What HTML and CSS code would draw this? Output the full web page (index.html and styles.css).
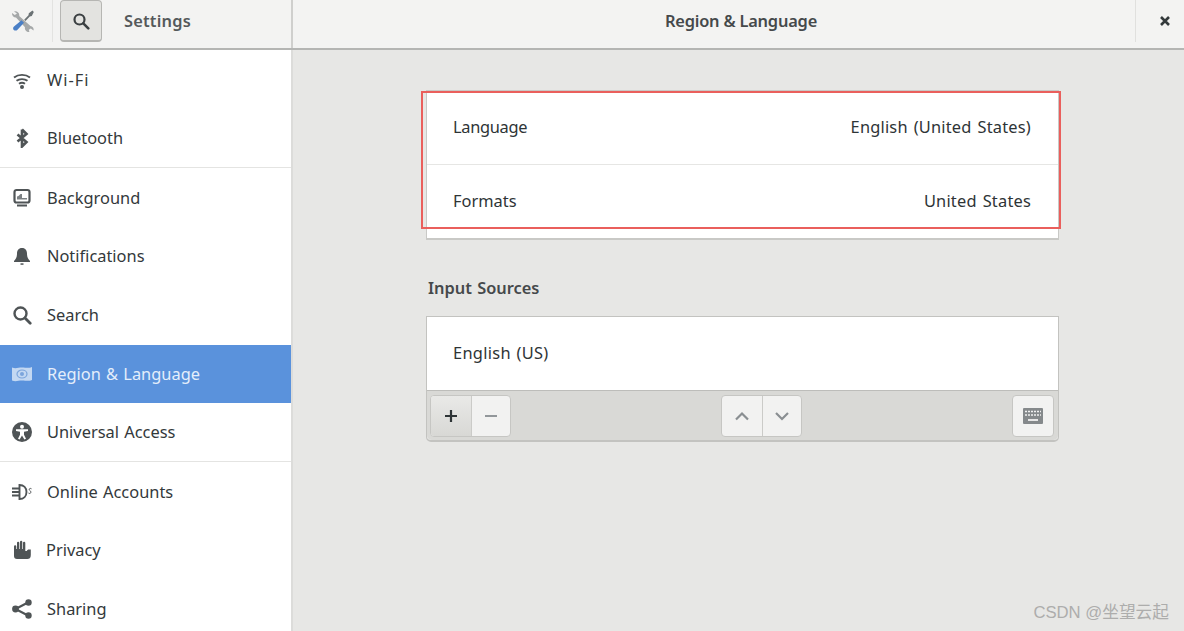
FILE: index.html
```html
<!DOCTYPE html>
<html lang="en">
<head>
<meta charset="utf-8">
<title>Settings</title>
<link rel="stylesheet" href="styles.css">
</head>
<body>
<div class="window">
  <header class="titlebar">
    <div class="title-left">
      <div class="app-icon">
        <svg width="22" height="22" viewBox="0 0 22 22">
          <path d="M2 1.500a4 4 0 0 1 5.200 4.600L18.500 16a3.600 3.600 0 0 1 3 4.500l-2.700-2-2 1.300.6 2.200a3.800 3.800 0 0 1-4.400-4.700L4 7.500A4 4 0 0 1 0 3l2.800 2L5 3.500z" fill="#a5a8a9"/>
          <path d="M20.500 .5l1.300 1.500-2 4-2 .5-4.300 4.500-1.300-1.300 4.300-4.500.3-2z" fill="#6b7275"/>
          <path d="M9.500 10.200l2.500 2.500-6.500 7c-1 1.100-2.700 1.200-3.700.2-1-1-.9-2.500.2-3.500z" fill="#4a7fc6"/>
        </svg>
      </div>
      <div class="search-btn">
        <svg width="18" height="18" viewBox="0 0 18 18"><circle cx="7.500" cy="7.500" r="5" fill="none" stroke="#3b4042" stroke-width="2.200"/><path d="M11.300 11.300l5 5" stroke="#3b4042" stroke-width="2.600" stroke-linecap="round"/></svg>
      </div>
      <div class="app-title">Settings</div>
    </div>
    <div class="title-main">Region &amp; Language</div>
    <div class="title-close">
      <svg width="12" height="12" viewBox="0 0 12 12"><path d="M2 2l8 8M10 2l-8 8" stroke="#33393b" stroke-width="2.600"/></svg>
    </div>
  </header>
  <div class="content">
    <nav class="sidebar">
      <div class="row">
        <svg class="ico" width="20" height="20" viewBox="0 0 20 20"><g fill="none" stroke="#4f5456" stroke-width="1.900"><path d="M2 7.500c4.500-3.500 11.500-3.500 16 0"/><path d="M4.500 10.800c3-2.300 8-2.300 11 0"/><path d="M7 13.800c1.700-1.200 4.300-1.200 6 0"/></g><circle cx="10" cy="17" r="2" fill="#4f5456"/></svg>
        <span class="wifi">Wi-Fi</span>
      </div>
      <div class="row sep">
        <svg class="ico" width="20" height="20" viewBox="0 0 20 20"><path d="M10 1.500v17l4.500-4.500L5.500 6.500M10 1.500L14.500 6 5.500 13.500" fill="none" stroke="#4f5456" stroke-width="2.600"/></svg>
        <span>Bluetooth</span>
      </div>
      <div class="row">
        <svg class="ico" width="20" height="20" viewBox="0 0 20 20"><rect x="2.500" y="2" width="15" height="12.500" rx="2" fill="none" stroke="#4f5456" stroke-width="2.200"/><path d="M5 11.500h10v-1.500H10V6H8.500L6.500 8 5 8.500z" fill="#7c8184"/><rect x="5" y="16.500" width="10" height="2" fill="#4f5456"/></svg>
        <span>Background</span>
      </div>
      <div class="row">
        <svg class="ico" width="20" height="20" viewBox="0 0 20 20"><path d="M10 2c3.600 0 5 2.500 5 5.500 0 3.500 1 5.500 3 7.500v1H2v-1c2-2 3-4 3-7.500C5 4.500 6.400 2 10 2z" fill="#4f5456"/><rect x="8.500" y="17.300" width="3" height="1.500" fill="#4f5456"/></svg>
        <span>Notifications</span>
      </div>
      <div class="row">
        <svg class="ico" width="20" height="20" viewBox="0 0 20 20"><circle cx="8.500" cy="8.500" r="6" fill="none" stroke="#4f5456" stroke-width="2.400"/><path d="M13 13l5.200 5.200" stroke="#4f5456" stroke-width="2.800" stroke-linecap="round"/></svg>
        <span>Search</span>
      </div>
      <div class="row active">
        <svg class="ico" width="20" height="20" viewBox="0 0 20 20"><path d="M0 3.500c4 1.500 6 0 10 0s6 1 10-.5v13c-4 1.500-6 .5-10 .5S4 18 0 16.500z" fill="#c3d8f2"/><ellipse cx="10" cy="10" rx="5" ry="4" fill="none" stroke="#7ba5dc" stroke-width="1.200"/><circle cx="10" cy="10" r="2" fill="#7ba5dc"/></svg>
        <span>Region &amp; Language</span>
      </div>
      <div class="row sep">
        <svg class="ico" width="20" height="20" viewBox="0 0 20 20"><circle cx="10" cy="10" r="10" fill="#4f5456"/><circle cx="10" cy="4.800" r="2" fill="#fff"/><path d="M4 7.200h12v1.800l-4 .8v3l2 4-1.600.8-2.400-4-2.400 4-1.600-.8 2-4v-3L4 9z" fill="#fff"/></svg>
        <span>Universal Access</span>
      </div>
      <div class="row">
        <svg class="ico" width="20" height="20" viewBox="0 0 20 20"><g fill="none" stroke="#4f5456" stroke-width="1.900"><path d="M7.500 3c4.200 0 7 3 7 7s-2.800 7-7 7z"/><path d="M0 6.500h7M0 10h7M0 13.500h7"/><path d="M19.500 6.800c-1.400-1-2.600 0-2.200 1s1.900 1.400 1.500 2.700-1.500 1.100-2.300.6" stroke-width="1"/></g></svg>
        <span>Online Accounts</span>
      </div>
      <div class="row">
        <svg class="ico" width="20" height="20" viewBox="0 0 20 20"><path d="M2 16V6.500a1 1 0 0 1 2.300 0V9h.7V3a1 1 0 0 1 2.300 0v6H8V2a1 1 0 0 1 2.300 0v7h.7V3a1 1 0 0 1 2.300 0v8h1.500c.5-1 1-1.500 2-1.500h2V15c0 3-1.500 4-3.500 4H5c-2 0-3-1-3-3z" fill="#4f5456"/></svg>
        <span class="privacy">Privacy</span>
      </div>
      <div class="row">
        <svg class="ico" width="20" height="20" viewBox="0 0 20 20"><path d="M16 3.500L3.500 10 16 16.500" fill="none" stroke="#4f5456" stroke-width="2.200"/><circle cx="16.500" cy="3.500" r="3.200" fill="#4f5456"/><circle cx="3.500" cy="10" r="3.400" fill="#4f5456"/><circle cx="16.500" cy="16.500" r="3.200" fill="#4f5456"/></svg>
        <span>Sharing</span>
      </div>
    </nav>
    <main class="panel">
      <section class="card">
        <div class="setting"><span class="lang">Language</span><span class="value">English (United States)</span></div>
        <div class="setting formats"><span>Formats</span><span class="value">United States</span></div>
      </section>
      <h2 class="heading">Input Sources</h2>
      <section class="sources">
        <div class="source">English (US)</div>
        <div class="toolbar">
          <div class="group">
            <div class="tbtn pressed"><svg width="14" height="14" viewBox="0 0 14 14"><path d="M7 1v12M1 7h12" stroke="#2e3436" stroke-width="2.200"/></svg></div>
            <div class="tbtn"><svg width="14" height="14" viewBox="0 0 14 14"><path d="M1 7h12" stroke="#92979a" stroke-width="2"/></svg></div>
          </div>
          <div class="group">
            <div class="tbtn"><svg width="16" height="16" viewBox="0 0 16 16"><path d="M2 11.500L8 5.500l6 6" fill="none" stroke="#8a8f92" stroke-width="2.200"/></svg></div>
            <div class="tbtn"><svg width="16" height="16" viewBox="0 0 16 16"><path d="M2 5l6 6 6-6" fill="none" stroke="#8a8f92" stroke-width="2.200"/></svg></div>
          </div>
          <div class="group">
            <div class="tbtn"><svg width="20" height="16" viewBox="0 0 20 16"><rect width="20" height="16" rx="1" fill="#85898b"/><path d="M2 3.500h16M2 7h16" stroke="#f1f1f1" stroke-width="1.500" stroke-dasharray="2 1"/><path d="M5 12h10" stroke="#f1f1f1" stroke-width="1.800"/></svg></div>
          </div>
        </div>
      </section>
    </main>
  </div>
  <div class="annotation"></div>
  <div class="watermark">CSDN @坐望云起</div>
</div>
</body>
</html>
```
FILE: styles.css
```css
* { box-sizing: border-box; }
html, body { margin: 0; height: 100%; overflow: hidden; }
body { font-family: "Noto Sans", "Noto Sans CJK SC", sans-serif; font-size: 16.400px; word-spacing: 1px; color: #2e3436; }
.window { position: relative; width: 1184px; height: 631px; overflow: hidden; background: #e7e7e5; }

.titlebar { display: flex; height: 50px; background: #f3f3f2; border-bottom: 2px solid #b4b5b3; }
.title-left { display: flex; align-items: flex-start; width: 293px; flex: none; border-right: 2px solid #cfcfcd; }
.app-icon { display: flex; align-items: center; justify-content: center; width: 53px; height: 42px; border-right: 1px solid #e3e3e1; padding-right: 6px; }
.search-btn { display: flex; align-items: center; justify-content: center; width: 42px; height: 42px; margin-left: 7px; border: 1px solid #b6b6b3; border-bottom-width: 2px; border-radius: 4px; background: #e3e3e0; }
.app-title { margin-left: 22px; font-weight: 600; line-height: 42px; letter-spacing: 0.200px; color: #55595b; }
.title-main { flex: 1; padding-left: 54px; text-align: center; line-height: 42px; font-weight: 600; word-spacing: 0; letter-spacing: -0.200px; color: #45494b; }
.title-close { display: flex; align-items: center; justify-content: center; width: 49px; height: 42px; padding-left: 9px; border-left: 1px solid #e0e0de; }

.content { display: flex; height: 581px; }
.sidebar { width: 293px; flex: none; padding-top: 0.600px; background: #fff; border-right: 2px solid #dcdcda; }
.row { display: flex; align-items: center; height: 58.800px; padding-left: 12px; gap: 15px; color: #33393b; }
.row .ico { flex: none; }
.row span { margin-bottom: 1px; }
.row.sep { border-bottom: 1px solid #e4e4e2; }
.row.active { background: #5a92dc; color: #e4eefb; }
.wifi { letter-spacing: 1px; }
.privacy { margin-left: -1px; }

.panel { flex: 1; padding: 40px 0 0 133px; }
.card { width: 633px; background: #fff; border: 1px solid #c9c9c6; border-width: 1px 1px 2px 1px; }
.setting { display: flex; justify-content: space-between; align-items: center; height: 73px; padding: 0 27px 2px 26px; }
.lang { letter-spacing: -0.300px; }
.value { letter-spacing: 0.200px; word-spacing: 1.500px; }
.formats { height: 74px; border-top: 1px solid #e6e6e4; }
.heading { margin: 36px 0 16px 2px; font-size: 16.400px; line-height: 24px; font-weight: 600; color: #45494b; }
.sources { width: 633px; border: 1px solid #c3c3c0; border-radius: 0 0 5px 5px; border-bottom-width: 2px; }
.source { height: 73px; display: flex; align-items: center; padding: 0 0 2px 26px; letter-spacing: 0.300px; background: #fff; }
.toolbar { display: flex; justify-content: space-between; align-items: center; height: 50px; padding: 0 4px 0 3px; background: #d9d9d6; border-top: 1px solid #bdbdba; border-radius: 0 0 5px 5px; }
.group { display: flex; border: 1px solid #c6c6c3; border-radius: 4px; background: #f2f2f1; }
.tbtn { display: flex; align-items: center; justify-content: center; width: 40px; height: 40px; }
.tbtn + .tbtn { width: 39px; border-left: 1px solid #cbcbc8; }
.tbtn.pressed { background: linear-gradient(#e9e9e7, #d8d8d5); border-radius: 3px 0 0 3px; }

.annotation { position: absolute; left: 421px; top: 91px; width: 640px; height: 138px; border: 2px solid #ea5f5c; pointer-events: none; }
.watermark { position: absolute; right: 15px; top: 603px; font-family: "Liberation Sans", "Noto Sans CJK SC", sans-serif; font-size: 16.700px; word-spacing: 0; line-height: 20px; color: #adadac; }
```
